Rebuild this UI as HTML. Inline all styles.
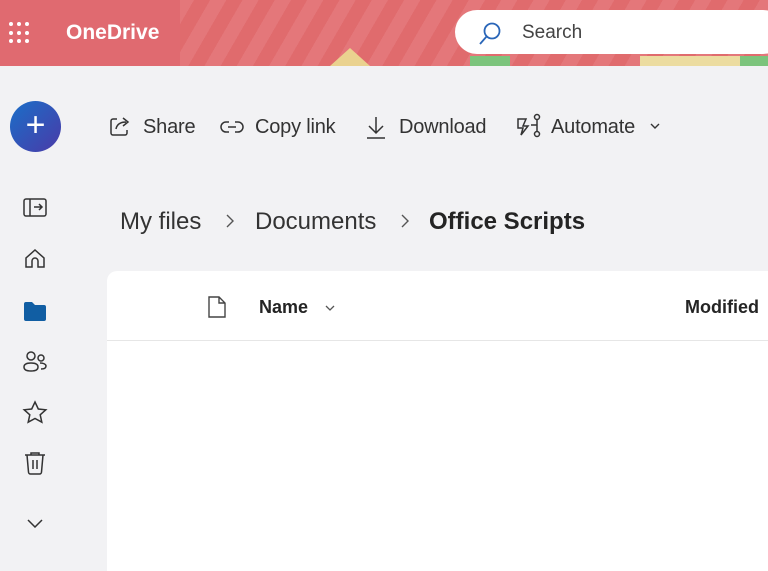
<!DOCTYPE html>
<html><head><style>
*{margin:0;padding:0;box-sizing:border-box}
body{width:768px;height:527px;overflow:hidden;background:#f2f2f4;font-family:"Liberation Sans",sans-serif;position:relative;color:#242424}
.hdr{position:absolute;left:0;top:0;width:768px;height:66px;background:repeating-linear-gradient(120deg,#e06b6d 0 14px,#e4777a 14px 28px)}
.hdr .left{position:absolute;left:0;top:0;width:180px;height:66px;background:#e06a70}
.dots{position:absolute;left:9px;top:22px;width:22px;height:22px;display:grid;grid-template-columns:repeat(3,4px);gap:4px}
.dots i{width:4px;height:4px;background:#fff;border-radius:50%}
.brand{position:absolute;left:66px;top:21px;color:#fff;font-size:21px;font-weight:bold}
.search{position:absolute;left:455px;top:10px;width:330px;height:44px;background:#fff;border-radius:22px}
.search span{position:absolute;left:67px;top:12px;font-size:19px;color:#444}
.t{position:absolute;font-size:20px;color:#333;letter-spacing:-0.2px}
.plus{position:absolute;left:10px;top:101px;width:51px;height:51px;border-radius:50%;background:linear-gradient(135deg,#1a6fc8,#4a3aa8);color:#fff;font-size:34px;text-align:center;line-height:48px}
.card{position:absolute;left:107px;top:271px;width:680px;height:300px;background:#fff;border-radius:10px 0 0 0}
.card .line{position:absolute;left:0;top:69px;width:100%;height:1px;background:#e6e6e6}
svg{position:absolute}
.bc{position:absolute;top:208px;font-size:24px;color:#333}
</style></head><body>
<div class="hdr">
<div class="left"></div>
<div class="dots"><i></i><i></i><i></i><i></i><i></i><i></i><i></i><i></i><i></i></div>
<div class="brand">OneDrive</div>
<div style="position:absolute;left:330px;top:48px;width:40px;height:18px;background:#ead28f;clip-path:polygon(50% 0,100% 100%,0 100%)"></div>
<div style="position:absolute;left:640px;top:56px;width:128px;height:10px;background:#ecdca0"></div>
<div style="position:absolute;left:740px;top:56px;width:28px;height:10px;background:#7cc47c"></div>
<div style="position:absolute;left:470px;top:56px;width:40px;height:10px;background:#7cc47c"></div>
<div class="search"><svg style="left:22px;top:11px" width="26" height="26" viewBox="0 0 26 26"><circle cx="15" cy="10" r="7.5" fill="none" stroke="#2a66b8" stroke-width="1.8"/><path d="M10 15 L3 23" stroke="#2a66b8" stroke-width="1.8"/></svg><span>Search</span></div>
</div>
<div class="plus">+</div>
<svg style="left:108px;top:114px" width="24" height="24" viewBox="0 0 24 24" fill="none" stroke="#333" stroke-width="1.5"><path d="M9 5H5a2 2 0 0 0-2 2v12a2 2 0 0 0 2 2h12a2 2 0 0 0 2-2v-3"/><path d="M8 15c1-5 5-7 10-7M15 4l5 4-5 4"/></svg>
<div class="t" style="left:143px;top:116px">Share</div>
<svg style="left:220px;top:115px" width="24" height="24" viewBox="0 0 24 24" fill="none" stroke="#333" stroke-width="1.5"><path d="M9 7H6a5 5 0 0 0 0 10h3M15 7h3a5 5 0 0 1 0 10h-3M8 12h8"/></svg>
<div class="t" style="left:255px;top:116px">Copy link</div>
<svg style="left:364px;top:114px" width="24" height="26" viewBox="0 0 24 26" fill="none" stroke="#333" stroke-width="1.5"><path d="M12 3v16M5 12l7 7 7-7M3 24h18"/></svg>
<div class="t" style="left:399px;top:116px">Download</div>
<svg style="left:515px;top:113px" width="28" height="26" viewBox="0 0 28 26" fill="none" stroke="#333" stroke-width="1.5"><path d="M3 6h8l-3 7h5l-7 9 2-7H3z"/><circle cx="22" cy="4" r="2.5"/><circle cx="22" cy="21" r="2.5"/><path d="M22 7v11M16 12h6"/></svg>
<div class="t" style="left:551px;top:116px">Automate</div>
<svg style="left:650px;top:122px" width="10" height="8" viewBox="0 0 10 8"><path d="M1 2l4 4 4-4" fill="none" stroke="#333" stroke-width="1.4"/></svg>
<svg style="left:22px;top:197px" width="26" height="22" viewBox="0 0 26 22" fill="none" stroke="#333" stroke-width="1.5"><rect x="2" y="2" width="22" height="17" rx="2"/><path d="M8 2v17M12 10h8M17 7l3 3-3 3"/></svg>
<svg style="left:23px;top:247px" width="24" height="24" viewBox="0 0 24 24" fill="none" stroke="#333" stroke-width="1.5"><path d="M3 20V11l9-8 9 8v9h-6v-6a3 3 0 0 0-6 0v6z"/></svg>
<svg style="left:23px;top:300px" width="24" height="22" viewBox="0 0 24 22"><path d="M1 4a2 2 0 0 1 2-2h6l3 3h9a2 2 0 0 1 2 2v12a2 2 0 0 1-2 2H3a2 2 0 0 1-2-2z" fill="#115ea3"/></svg>
<svg style="left:22px;top:350px" width="26" height="24" viewBox="0 0 26 24" fill="none" stroke="#333" stroke-width="1.5"><circle cx="9" cy="6" r="4"/><path d="M2 17c0-3 3-4 7-4s7 1 7 4-3 4-7 4-7-1-7-4z"/><circle cx="19" cy="8" r="3"/><path d="M18 13c3 0 6 1 6 3s-2 3-5 3"/></svg>
<svg style="left:22px;top:400px" width="26" height="26" viewBox="0 0 26 26" fill="none" stroke="#333" stroke-width="1.5"><path d="M13 2l3.3 7 7.5.8-5.6 5 1.6 7.4L13 18.5l-6.8 3.7 1.6-7.4-5.6-5 7.5-.8z"/></svg>
<svg style="left:23px;top:450px" width="24" height="26" viewBox="0 0 24 26" fill="none" stroke="#333" stroke-width="1.5"><path d="M2 5h20M8 5V3h8v2M4 5l1.5 17a2 2 0 0 0 2 2h9a2 2 0 0 0 2-2L20 5M10 10v9M14 10v9"/></svg>
<svg style="left:26px;top:518px" width="18" height="10" viewBox="0 0 18 10"><path d="M2 2l7 7 7-7" fill="none" stroke="#333" stroke-width="1.5"/></svg>
<div class="bc" style="left:120px">My files</div>
<svg style="left:225px;top:214px" width="10" height="14" viewBox="0 0 10 14"><path d="M2 1l6 6-6 6" fill="none" stroke="#555" stroke-width="1.4"/></svg>
<div class="bc" style="left:255px">Documents</div>
<svg style="left:400px;top:214px" width="10" height="14" viewBox="0 0 10 14"><path d="M2 1l6 6-6 6" fill="none" stroke="#555" stroke-width="1.4"/></svg>
<div class="bc" style="left:429px;font-weight:bold;color:#242424">Office Scripts</div>
<div class="card"><div class="line"></div>
<svg style="left:100px;top:24px" width="20" height="24" viewBox="0 0 20 24" fill="none" stroke="#444" stroke-width="1.4"><path d="M2 2h10l6 6v14H2zM12 2v6h6"/></svg>
<div style="position:absolute;left:152px;top:26px;font-size:18px;font-weight:bold;color:#242424">Name</div>
<svg style="left:218px;top:33px" width="10" height="8" viewBox="0 0 10 8"><path d="M1 2l4 4 4-4" fill="none" stroke="#555" stroke-width="1.3"/></svg>
<div style="position:absolute;left:578px;top:26px;font-size:18px;font-weight:bold;color:#242424">Modified</div>
</div>
</body></html>
